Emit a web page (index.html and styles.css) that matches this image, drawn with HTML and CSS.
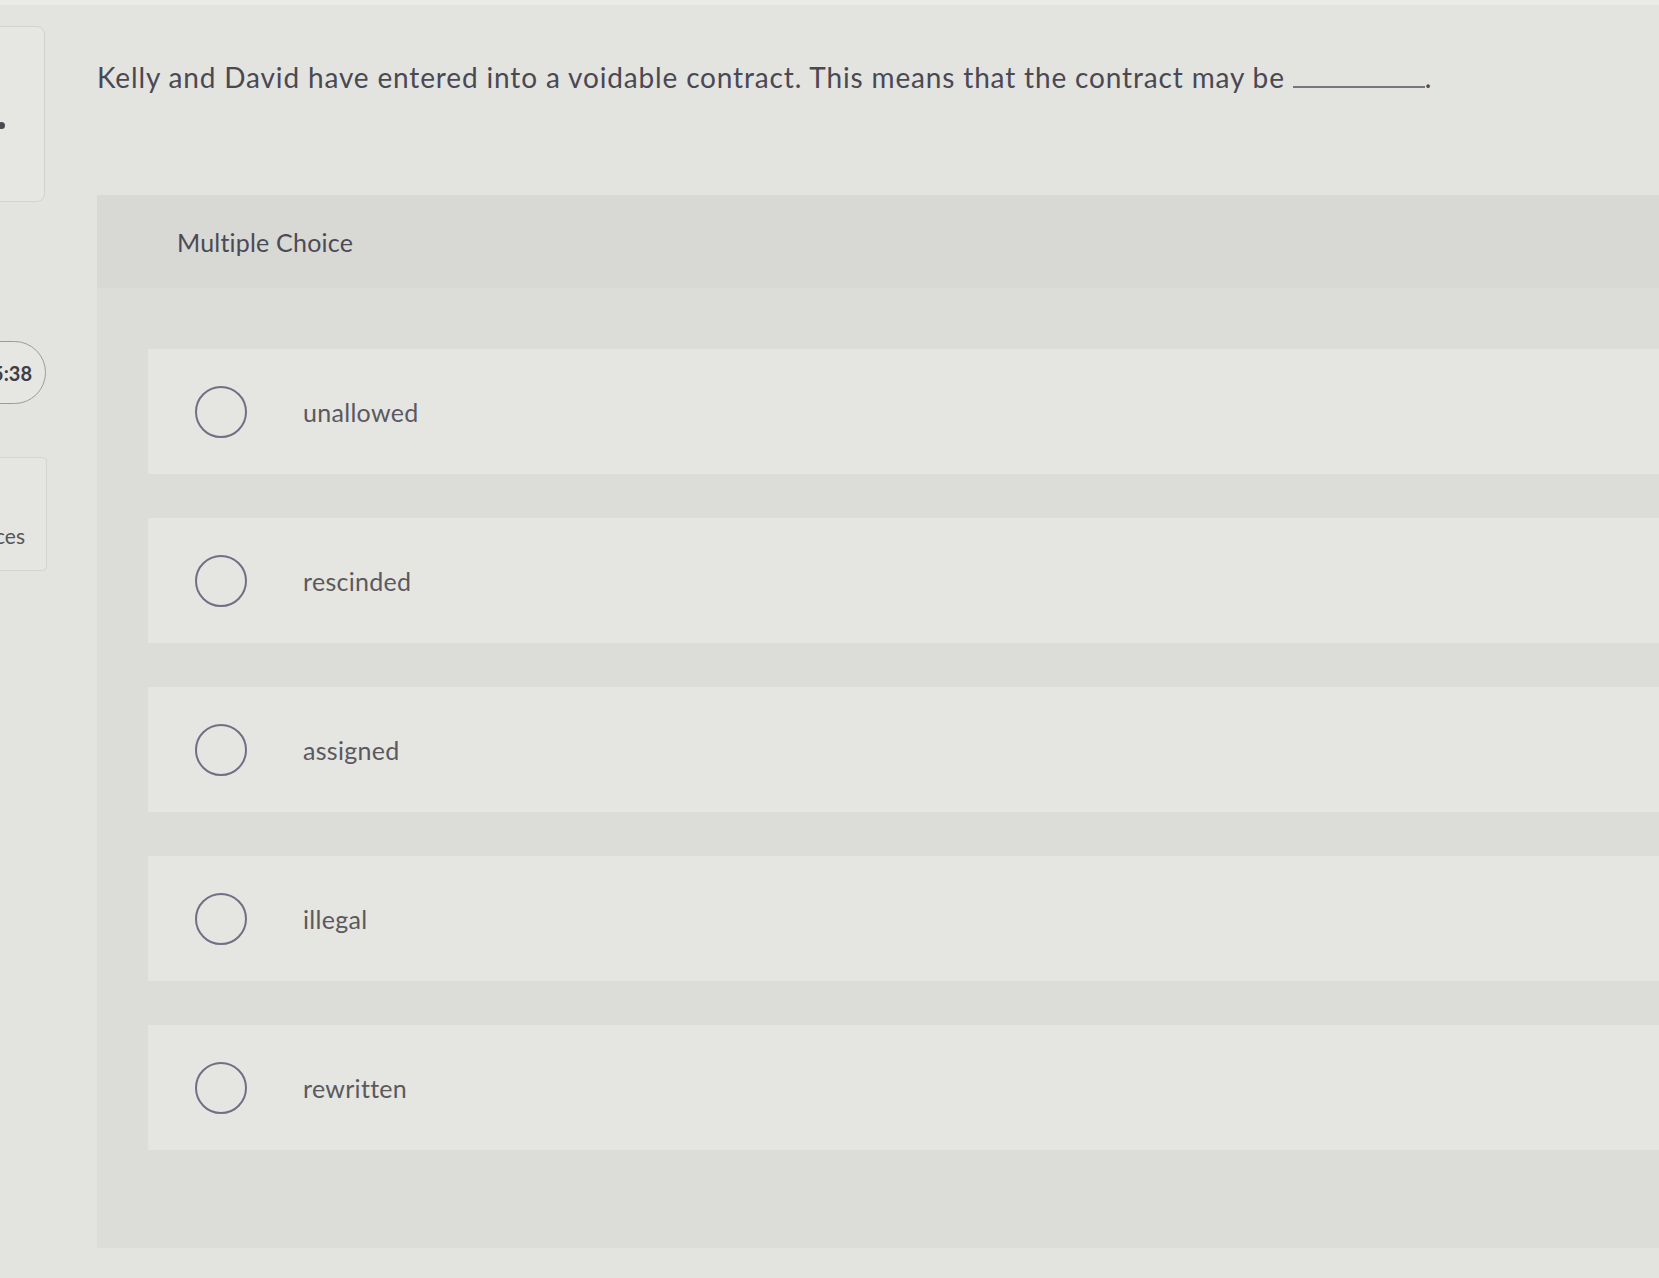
FILE: index.html
```html
<!DOCTYPE html>
<html lang="en">
<head>
<meta charset="utf-8">
<title>Multiple Choice</title>
<link rel="stylesheet" href="styles.css">
</head>
<body>
<div class="page">
  <aside class="sidebar">
    <div class="side-card"><span class="side-dot"></span></div>
    <div class="timer">5:38</div>
    <div class="side-box"><span class="side-box-text">ces</span></div>
  </aside>
  <main class="main">
    <p class="question">Kelly and David have entered into a voidable contract. This means that the contract may be <span class="blank"></span>.</p>
    <section class="panel">
      <header class="panel-head">Multiple Choice</header>
      <div class="options">
        <label class="option"><span class="radio"></span><span class="opt-text">unallowed</span></label>
        <label class="option"><span class="radio"></span><span class="opt-text">rescinded</span></label>
        <label class="option"><span class="radio"></span><span class="opt-text">assigned</span></label>
        <label class="option"><span class="radio"></span><span class="opt-text">illegal</span></label>
        <label class="option"><span class="radio"></span><span class="opt-text">rewritten</span></label>
      </div>
    </section>
  </main>
</div>
</body>
</html>
```

FILE: styles.css
```css
html, body {
  margin: 0;
  padding: 0;
}
body {
  width: 1659px;
  height: 1278px;
  overflow: hidden;
  background: #e3e3e0;
  font-family: "Lato", "Open Sans", sans-serif;
  color: #4b4954;
}
.page {
  display: flex;
  height: 1278px;
  border-top: 5px solid #eaeae7;
  box-sizing: border-box;
}
.sidebar {
  flex: none;
  width: 46px;
  display: flex;
  flex-direction: column;
}
.side-card {
  margin-top: 21px;
  margin-left: -20px;
  width: 63px;
  height: 174px;
  border: 1px solid #d2d2cf;
  border-radius: 8px;
  background: #e6e6e3;
  display: flex;
  align-items: center;
}
.side-dot {
  width: 7px;
  height: 7px;
  border-radius: 50%;
  background: #4a4a4e;
  margin-left: 17px;
  margin-top: 22px;
}
.timer {
  margin-top: 139px;
  margin-left: -40px;
  width: 86px;
  height: 63px;
  border: 1.5px solid #9b9b9c;
  border-radius: 32px;
  display: flex;
  align-items: center;
  justify-content: flex-end;
  padding-right: 13px;
  box-sizing: border-box;
  font-weight: 700;
  font-size: 20px;
  color: #3e3e44;
  background: #e6e6e3;
}
.side-box {
  margin-top: 53px;
  margin-left: -20px;
  width: 67px;
  height: 114px;
  border: 1px solid #d4d4d1;
  border-radius: 4px;
  box-sizing: border-box;
  display: flex;
  align-items: flex-end;
  padding-bottom: 22px;
  background: #e5e5e2;
}
.side-box-text {
  margin-left: 14px;
  font-size: 21px;
  color: #55545a;
}
.main {
  flex: 1;
  padding-left: 51px;
  display: flex;
  flex-direction: column;
  min-width: 0;
}
.question {
  margin: 55px 0 0 0;
  font-size: 28px;
  line-height: 34px;
  letter-spacing: 0.85px;
  white-space: nowrap;
  color: #4a4853;
}
.blank {
  display: inline-block;
  width: 132px;
  margin-left: 0;
  border-bottom: 2px solid #77767c;
  vertical-align: baseline;
}
.panel {
  margin-top: 101px;
  background: #dcdcd9;
  height: 1053px;
  display: flex;
  flex-direction: column;
}
.panel-head {
  height: 93px;
  background: #d8d8d5;
  padding-left: 80px;
  display: flex;
  align-items: center;
  font-size: 25px;
  letter-spacing: 0.2px;
  color: #4c4a56;
}
.options {
  padding: 61px 0 0 51px;
  display: flex;
  flex-direction: column;
  gap: 44px;
}
.option {
  height: 125px;
  background: #e5e5e2;
  display: flex;
  align-items: center;
  padding-left: 47px;
}
.radio {
  flex: none;
  width: 52px;
  height: 52px;
  border: 2px solid #6f7083;
  border-radius: 50%;
  box-sizing: border-box;
}
.opt-text {
  margin-left: 56px;
  font-size: 25px;
  letter-spacing: 0.3px;
  color: #5a595e;
}
```
